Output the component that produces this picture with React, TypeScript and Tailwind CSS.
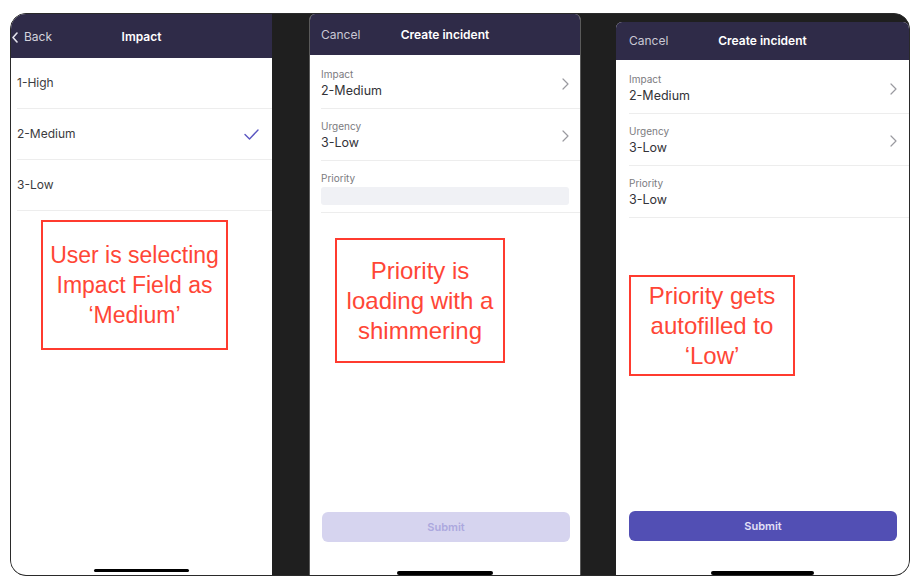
import React from "react";

const UI = { fontFamily: "Inter, 'Noto Sans', sans-serif" };
const NOTE = { fontFamily: "'Liberation Sans', Arial, sans-serif" };

function Chevron() {
  return (
    <svg width="7" height="12" viewBox="0 0 7 12" fill="none">
      <path d="M1 1l5 5-5 5" stroke="#9a9aa0" strokeWidth="1.2" strokeLinecap="round" strokeLinejoin="round" />
    </svg>
  );
}

function Field({ label, value, pl, pr }: { label: string; value: string; pl: string; pr: string }) {
  return (
    <div className={`${pl} ${pr} h-[52px] pt-[10px] pb-[8px] border-b border-[#ededed] flex items-center justify-between`}>
      <div className="flex flex-col">
        <span className="text-[10px] leading-[14px] text-[#7b7b80]">{label}</span>
        <span className="text-[12.5px] leading-[18px] mt-[1px] text-[#333338]">{value}</span>
      </div>
      <Chevron />
    </div>
  );
}

function Note({ lines, cls }: { lines: string[]; cls: string }) {
  return (
    <div
      className={`${cls} border-2 border-[#ff3b2f] flex flex-col items-center justify-center text-center leading-[30px] text-[#ff4636]`}
      style={NOTE}
    >
      {lines.map((l) => (
        <span key={l}>{l}</span>
      ))}
    </div>
  );
}

export default function App() {
  return (
    <div className="w-[912px] h-[581px] bg-white pt-[13px] pl-[10px]" style={UI}>
      <div className="w-[900px] h-[563px] rounded-[16px] border border-[#2a2a2a] bg-[#1f1f1f] overflow-hidden flex items-stretch">
        {/* Panel 1 */}
        <div className="w-[261px] bg-white flex flex-col">
          <div className="h-[44px] shrink-0 bg-[#2f2b48] grid grid-cols-[1fr_auto_1fr] items-center pt-[2px]">
            <div className="flex items-center pl-[1px] gap-[6px] text-[12px] text-[#d4d3dd]">
              <svg width="6" height="11" viewBox="0 0 6 11" fill="none">
                <path d="M5 1L1 5.5 5 10" stroke="#e4e3ec" strokeWidth="1.6" strokeLinecap="round" strokeLinejoin="round" />
              </svg>
              <span>Back</span>
            </div>
            <span className="text-[12px] font-semibold text-white">Impact</span>
            <div />
          </div>
          {["1-High", "2-Medium", "3-Low"].map((t) => (
            <div key={t} className="ml-[6px] pr-[13px] h-[51px] border-b border-[#ededed] flex items-center justify-between">
              <span className="text-[12px] text-[#3b3b40]">{t}</span>
              {t === "2-Medium" && (
                <svg width="15" height="11" viewBox="0 0 15 11" fill="none">
                  <path d="M1 5.5l4.5 4.5L14 1" stroke="#5b57c2" strokeWidth="1.4" strokeLinecap="round" strokeLinejoin="round" />
                </svg>
              )}
            </div>
          ))}
          <Note
            lines={["User is selecting", "Impact Field as", "\u2018Medium\u2019"]}
            cls="mt-[9px] ml-[30px] w-[187px] h-[130px] text-[23px]"
          />
          <div className="flex-1" />
          <div className="w-[95px] h-[3px] rounded-full bg-black mx-auto mb-[3px]" />
        </div>

        {/* Panel 2 */}
        <div className="ml-[37px] w-[272px] bg-white border-x border-[#5a5a5a] rounded-t-[6px] overflow-hidden flex flex-col">
          <div className="h-[41px] shrink-0 bg-[#2f2b48] grid grid-cols-[1fr_auto_1fr] items-center">
            <span className="pl-[11px] text-[12px] text-[#c9c8d4]">Cancel</span>
            <span className="text-[12px] font-semibold text-white">Create incident</span>
            <div />
          </div>
          <div className="pt-[2px]">
            <Field label="Impact" value="2-Medium" pl="ml-[11px]" pr="pr-[11px]" />
            <Field label="Urgency" value="3-Low" pl="ml-[11px]" pr="pr-[11px]" />
            <div className="ml-[11px] pr-[11px] pt-[10px] pb-[7px] border-b border-[#ededed] flex flex-col">
              <span className="text-[10px] leading-[14px] text-[#7b7b80]">Priority</span>
              <div className="mt-[2px] h-[18px] rounded-[3px] bg-[#f0f1f5]" />
            </div>
          </div>
          <Note
            lines={["Priority is", "loading with a", "shimmering"]}
            cls="mt-[25px] ml-[25px] w-[170px] h-[125px] text-[24px]"
          />
          <div className="flex-1" />
          <div className="ml-[12px] w-[248px] h-[30px] rounded-[6px] bg-[#d6d4ef] flex items-center justify-center text-[11px] font-semibold text-[#aca8de]">
            Submit
          </div>
          <div className="mt-[29px] w-[96px] h-[4px] rounded-full bg-black mx-auto" />
        </div>

        {/* Panel 3 */}
        <div className="ml-[35px] mt-[8px] w-[293px] bg-white rounded-t-[6px] overflow-hidden flex flex-col">
          <div className="h-[38px] shrink-0 bg-[#2f2b48] grid grid-cols-[1fr_auto_1fr] items-center">
            <span className="pl-[13px] text-[12px] text-[#c9c8d4]">Cancel</span>
            <span className="text-[12px] font-semibold text-white">Create incident</span>
            <div />
          </div>
          <div className="pt-[2px]">
            <Field label="Impact" value="2-Medium" pl="ml-[13px]" pr="pr-[12px]" />
            <Field label="Urgency" value="3-Low" pl="ml-[13px]" pr="pr-[12px]" />
            <div className="ml-[13px] pr-[12px] h-[52px] pt-[10px] pb-[8px] border-b border-[#ededed] flex flex-col">
              <span className="text-[10px] leading-[14px] text-[#7b7b80]">Priority</span>
              <span className="text-[12.5px] leading-[18px] mt-[1px] text-[#333338]">3-Low</span>
            </div>
          </div>
          <Note
            lines={["Priority gets", "autofilled to", "\u2018Low\u2019"]}
            cls="mt-[57px] ml-[13px] w-[166px] h-[101px] text-[24px]"
          />
          <div className="flex-1" />
          <div className="ml-[13px] w-[268px] h-[30px] rounded-[6px] bg-[#524fb4] flex items-center justify-center text-[11px] font-semibold text-[#e3e1f7] pt-[1px]">
            Submit
          </div>
          <div className="mt-[30px] w-[103px] h-[4px] rounded-full bg-black mx-auto shrink-0" />
        </div>
      </div>
    </div>
  );
}
